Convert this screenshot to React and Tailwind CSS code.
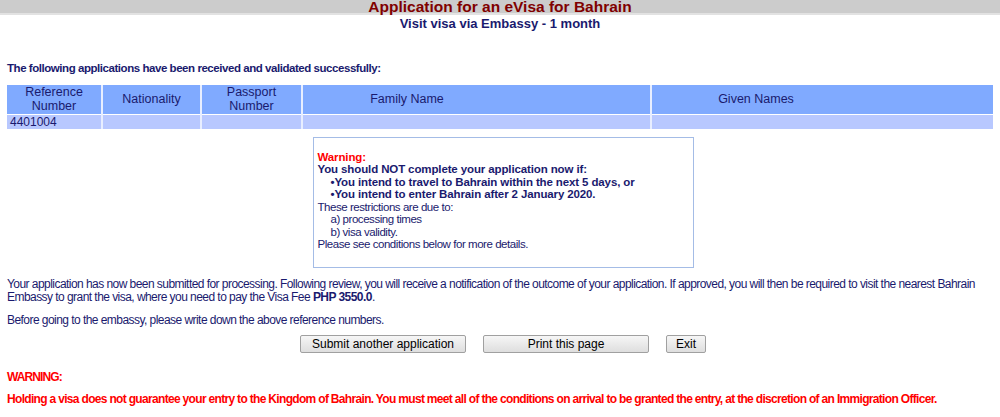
import React from "react";

const font = { fontFamily: '"Liberation Sans", Arial, sans-serif' };

export default function App() {
  return (
    <div className="w-[1000px] h-[417px] bg-white overflow-hidden text-[#1a1a6e]" style={font}>
      <div className="h-[15px] bg-[#cccccc] border-b-2 border-[#e2e2e2] flex justify-center items-center">
        <span className="text-[15.5px] font-bold text-[#800000] leading-[15px]">Application for an eVisa for Bahrain</span>
      </div>
      <div className="text-center text-[13px] font-bold text-[#1a1a6e] leading-[14px] mt-[2px]">Visit visa via Embassy - 1 month</div>

      <div className="px-[7px]">
        <div className="mt-[30px] text-[11.5px] font-bold text-[#1a1a6e] leading-[14px] tracking-[-0.45px]">The following applications have been received and validated successfully:</div>
        <table className="mt-[10px] w-[986px] border-collapse text-[12.5px] text-[#1a1a6e]">
          <thead>
            <tr className="bg-[#80aaff] h-[29px]">
              <th className="w-[95px] font-normal leading-[14px] border-r-2 border-[#e8eeff] border-b border-b-white">Reference<br />Number</th>
              <th className="w-[99px] font-normal border-r-2 border-[#e8eeff] border-b border-b-white">Nationality</th>
              <th className="w-[101px] font-normal leading-[14px] border-r-2 border-[#e8eeff] border-b border-b-white">Passport<br />Number</th>
              <th className="w-[349px] font-normal border-r-2 border-[#e8eeff] border-b border-b-white text-left">
                <div className="w-[208px] text-center">Family Name</div>
              </th>
              <th className="font-normal border-b border-b-white text-left">
                <div className="w-[208px] text-center">Given Names</div>
              </th>
            </tr>
          </thead>
          <tbody>
            <tr className="bg-[#b8c8ff] h-[14px]">
              <td className="pl-[3px] leading-[14px] text-[12px] border-r-2 border-[#e8eeff]">4401004</td>
              <td className="border-r-2 border-[#e8eeff]"></td>
              <td className="border-r-2 border-[#e8eeff]"></td>
              <td className="border-r-2 border-[#e8eeff]"></td>
              <td></td>
            </tr>
          </tbody>
        </table>

        <div className="flex justify-center mt-[8px] ml-[6px]">
          <div className="w-[381px] h-[131px] border border-[#a4bce6] pl-[4px] pt-[13px] text-[11.5px] leading-[12.5px] text-[#1a1a6e] tracking-[-0.45px]">
            <div className="font-bold text-[#ff0000] tracking-[-0.12px]">Warning:</div>
            <div className="font-bold tracking-[-0.12px]">You should NOT complete your application now if:</div>
            <div className="font-bold pl-[13px] tracking-[-0.12px]">•You intend to travel to Bahrain within the next 5 days, or</div>
            <div className="font-bold pl-[13px] tracking-[-0.12px]">•You intend to enter Bahrain after 2 January 2020.</div>
            <div>These restrictions are due to:</div>
            <div className="pl-[13px]">a) processing times</div>
            <div className="pl-[13px]">b) visa validity.</div>
            <div>Please see conditions below for more details.</div>
          </div>
        </div>

        <div className="mt-[10px] text-[12px] leading-[13px] text-[#1a1a6e] tracking-[-0.55px]">
          Your application has now been submitted for processing. Following review, you will receive a notification of the outcome of your application. If approved, you will then be required to visit the nearest Bahrain<br />
          Embassy to grant the visa, where you need to pay the Visa Fee <b>PHP 3550.0</b>.
        </div>
        <div className="mt-[10px] text-[12px] leading-[13px] text-[#1a1a6e] tracking-[-0.55px]">
          Before going to the embassy, please write down the above reference numbers.
        </div>

        <div className="flex justify-center gap-[17px] mt-[8px] ml-[6px]">
          <button className="w-[166px] h-[18px] border border-[#a0a0a0] rounded-[2px] bg-gradient-to-b from-[#f6f6f6] to-[#dedede] text-[12px] text-black leading-[16px]">Submit another application</button>
          <button className="w-[166px] h-[18px] border border-[#a0a0a0] rounded-[2px] bg-gradient-to-b from-[#f6f6f6] to-[#dedede] text-[12px] text-black leading-[16px]">Print this page</button>
          <button className="w-[40px] h-[18px] border border-[#a0a0a0] rounded-[2px] bg-gradient-to-b from-[#f6f6f6] to-[#dedede] text-[12px] text-black leading-[16px]">Exit</button>
        </div>

        <div className="mt-[18px] text-[12px] font-bold text-[#ff0000] leading-[13px] tracking-[-0.9px]">WARNING:</div>
        <div className="mt-[9px] text-[12px] font-bold text-[#ff0000] leading-[13px] tracking-[-0.68px]">Holding a visa does not guarantee your entry to the Kingdom of Bahrain. You must meet all of the conditions on arrival to be granted the entry, at the discretion of an Immigration Officer.</div>
      </div>
    </div>
  );
}
